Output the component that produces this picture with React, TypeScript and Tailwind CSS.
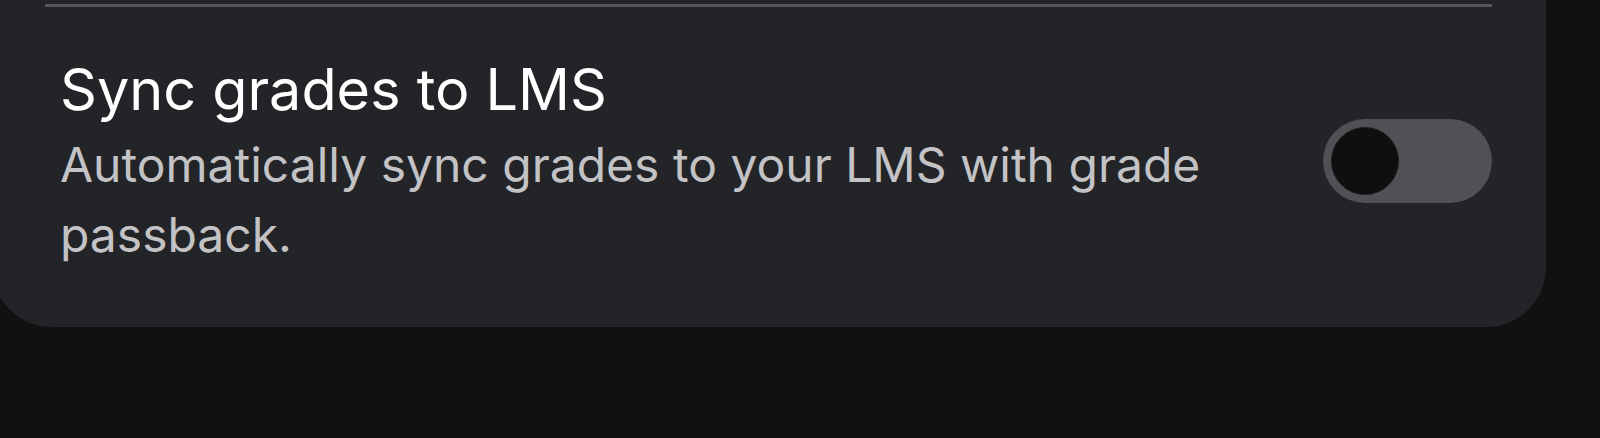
import { useState } from 'react'

function Toggle({ on, onChange }: { on: boolean; onChange: () => void }) {
  return (
    <button
      type="button"
      role="switch"
      aria-checked={on}
      onClick={onChange}
      className={`flex h-[84px] w-[169px] shrink-0 items-center rounded-full px-[8px] transition-colors ${
        on ? 'justify-end bg-[#3b82f6]' : 'justify-start bg-[#505155]'
      }`}
    >
      <span className="block h-[68px] w-[68px] rounded-full border border-[#1a1a1c] bg-[#0f0f10]" />
    </button>
  )
}

export default function App() {
  const [sync, setSync] = useState(false)

  return (
    <div className="h-[438px] w-full overflow-hidden bg-[#111111] font-['Inter',sans-serif]">
      <div className="-ml-2 -mt-[100px] w-[1554px] rounded-[60px] bg-[#232427] pl-[53px] pr-[54px]">
        {/* previous row, cut off at top */}
        <div className="h-[107px] border-b-[3px] border-[#56575b]" />

        <div className="flex items-center justify-between gap-16 pl-[15px] pt-[45px] pb-[57px]">
          <div className="flex max-w-[1200px] flex-col gap-[4px]">
            <div className="text-[57.5px] leading-[74px] text-white">Sync grades to LMS</div>
            <div className="text-[48px] leading-[70px] text-[#c3c3c6]">
              Automatically sync grades to your LMS with grade passback.
            </div>
          </div>
          <Toggle on={sync} onChange={() => setSync(!sync)} />
        </div>
      </div>
    </div>
  )
}
